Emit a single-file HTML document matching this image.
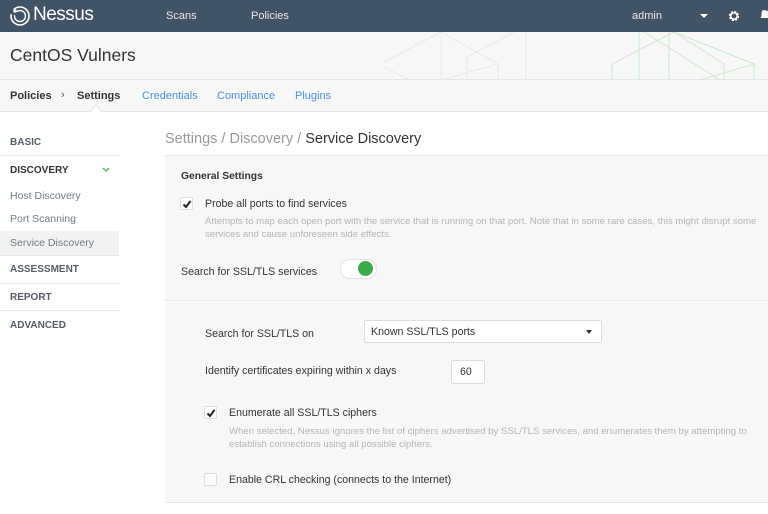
<!DOCTYPE html>
<html><head><meta charset="utf-8"><style>
*{box-sizing:border-box;margin:0;padding:0}
body{width:768px;height:514px;overflow:hidden;background:#fff;font-family:"Liberation Sans",sans-serif;position:relative}
.a{position:absolute}
.top{left:0;top:0;width:768px;height:32px;background:#435366}
.band{left:0;top:32px;width:768px;height:48px;background:#f7f7f7;border-bottom:1px solid #e6e6e6}
.nav{left:0;top:80px;width:768px;height:32px;background:#f7f7f7;border-bottom:1px solid #e3e3e3}
.t{white-space:nowrap}
.side{font-size:10px;font-weight:bold;color:#555e68;left:10px}
.line{left:0;width:119px;height:1px;background:#e6e6e6}
.sub{font-size:10.5px;color:#6f7a85;left:10px}
.p1{left:165px;top:155px;width:603px;height:146px;background:#f7f7f7;border-top:1px solid #e5e5e5;border-bottom:1px solid #e5e5e5}
.p2{left:165px;top:302px;width:603px;height:201px;background:#f7f7f7;border-bottom:1px solid #e5e5e5}
.lab{font-size:10.6px;color:#333}
.desc{font-size:9.6px;color:#b5b5b5;line-height:13px}
.cb{width:13px;height:13px;background:#fff;border:1px solid #ddd;border-radius:2px}
.cb svg{position:absolute;left:1px;top:1px}
</style></head><body>
<div class="a top"></div>
<svg class="a" style="left:9px;top:5px" width="22" height="22" viewBox="0 0 22 22"><circle cx="11" cy="11" r="9" fill="none" stroke="#fff" stroke-width="1.6" stroke-dasharray="30 5"/><circle cx="11" cy="11" r="5.5" fill="none" stroke="#fff" stroke-width="1.4" stroke-dasharray="18 4"/><circle cx="6" cy="6" r="1.8" fill="#fff"/></svg>
<div class="a t" style="left:33px;top:4px;font-size:19px;color:#fff;letter-spacing:-0.5px">Nessus</div>
<div class="a t" style="left:166px;top:10px;font-size:11px;color:#e6eaee">Scans</div>
<div class="a t" style="left:251px;top:10px;font-size:11px;color:#e6eaee">Policies</div>
<div class="a t" style="left:632px;top:10px;font-size:11px;color:#e6eaee">admin</div>
<div class="a" style="left:700px;top:14px;border-left:4px solid transparent;border-right:4px solid transparent;border-top:4px solid #fff"></div>
<svg class="a" style="left:728px;top:10px" width="12" height="12" viewBox="0 0 12 12"><circle cx="6" cy="6" r="4" fill="none" stroke="#fff" stroke-width="2.2" stroke-dasharray="2 1.15"/><circle cx="6" cy="6" r="3.2" fill="none" stroke="#fff" stroke-width="1.6"/></svg>
<svg class="a" style="left:760px;top:9px" width="8" height="12"><path d="M4 1C1.5 1 1.5 4 1.5 7L0.5 9H8V2z" fill="#fff"/></svg>
<div class="a band"></div>
<svg class="a" style="left:384px;top:32px" width="384" height="48"><g fill="none" stroke-width="1"><g stroke="#e4ebe4"><path d="M0 30L57 0L114 32L57 48M57 0V48M83 48V25L130 0M114 32V48M142 0V48M26 48L0 35"/></g><g stroke="#cfe6cf"><path d="M228 48V32L290 0L340 32V48M255 0V48M285 0V48M290 0L370 32V48M316 48L370 32M260 0L336 48"/></g></g></svg>
<div class="a t" style="left:10px;top:45px;font-size:17.5px;color:#333">CentOS Vulners</div>
<div class="a nav"></div>
<div class="a t" style="left:10px;top:90px;font-size:11px;font-weight:bold;color:#333">Policies</div>
<div class="a t" style="left:61px;top:89px;font-size:11px;color:#555">›</div>
<div class="a t" style="left:77px;top:90px;font-size:11px;font-weight:bold;color:#333">Settings</div>
<div class="a" style="left:92px;top:106px;width:8px;height:8px;background:#fff;border-left:1px solid #e3e3e3;border-top:1px solid #e3e3e3;transform:rotate(45deg)"></div>
<div class="a t" style="left:142px;top:90px;font-size:11px;color:#4a90d9">Credentials</div>
<div class="a t" style="left:217px;top:90px;font-size:11px;color:#4a90d9">Compliance</div>
<div class="a t" style="left:295px;top:90px;font-size:11px;color:#4a90d9">Plugins</div>

<div class="a t side" style="top:137px">BASIC</div>
<div class="a line" style="top:155px"></div>
<div class="a t side" style="top:165px;color:#333">DISCOVERY</div>
<svg class="a" style="left:102px;top:167px" width="8" height="6"><path d="M1 1L4 4L7 1" fill="none" stroke="#5cb85c" stroke-width="1.4"/></svg>
<div class="a t sub" style="top:190px">Host Discovery</div>
<div class="a t sub" style="top:213px">Port Scanning</div>
<div class="a" style="left:0;top:231px;width:119px;height:24px;background:#f2f2f2"></div>
<div class="a t sub" style="top:237px">Service Discovery</div>
<div class="a line" style="top:255px"></div>
<div class="a t side" style="top:264px">ASSESSMENT</div>
<div class="a line" style="top:283px"></div>
<div class="a t side" style="top:292px">REPORT</div>
<div class="a line" style="top:310px"></div>
<div class="a t side" style="top:320px">ADVANCED</div>

<div class="a t" style="left:165px;top:131px;font-size:14.5px;color:#999">Settings / Discovery / <span style="color:#333">Service Discovery</span></div>
<div class="a p1"></div>
<div class="a t" style="left:181px;top:171px;font-size:10.3px;font-weight:bold;color:#333">General Settings</div>
<div class="a cb" style="left:180px;top:197px"><svg width="10" height="10"><path d="M1.5 5.5L4 8L8.5 2" fill="none" stroke="#222" stroke-width="2"/></svg></div>
<div class="a t lab" style="left:205px;top:198px">Probe all ports to find services</div>
<div class="a desc" style="left:205px;top:215px;width:560px">Attempts to map each open port with the service that is running on that port. Note that in some rare cases, this might disrupt some services and cause unforeseen side effects.</div>
<div class="a t lab" style="left:181px;top:266px">Search for SSL/TLS services</div>
<div class="a" style="left:340px;top:259px;width:37px;height:20px;border-radius:10px;background:#fff;border:1px solid #e3e3e3"></div>
<div class="a" style="left:358px;top:261px;width:15px;height:15px;border-radius:50%;background:#3eab4a"></div>

<div class="a p2"></div>
<div class="a t lab" style="left:205px;top:328px">Search for SSL/TLS on</div>
<div class="a" style="left:364px;top:320px;width:238px;height:23px;background:#fff;border:1px solid #ddd;border-radius:2px"></div>
<div class="a t lab" style="left:371px;top:326px">Known SSL/TLS ports</div>
<div class="a" style="left:586px;top:330px;border-left:3.5px solid transparent;border-right:3.5px solid transparent;border-top:4px solid #333"></div>
<div class="a t lab" style="left:205px;top:365px">Identify certificates expiring within x days</div>
<div class="a" style="left:451px;top:360px;width:34px;height:24px;background:#fff;border:1px solid #ddd;border-radius:2px"></div>
<div class="a t lab" style="left:460px;top:366px">60</div>
<div class="a cb" style="left:204px;top:406px"><svg width="10" height="10"><path d="M1.5 5.5L4 8L8.5 2" fill="none" stroke="#222" stroke-width="2"/></svg></div>
<div class="a t lab" style="left:229px;top:407px">Enumerate all SSL/TLS ciphers</div>
<div class="a desc" style="left:229px;top:425px;width:535px">When selected, Nessus ignores the list of ciphers advertised by SSL/TLS services, and enumerates them by attempting to establish connections using all possible ciphers.</div>
<div class="a cb" style="left:204px;top:473px"></div>
<div class="a t lab" style="left:229px;top:474px">Enable CRL checking (connects to the Internet)</div>
</body></html>
